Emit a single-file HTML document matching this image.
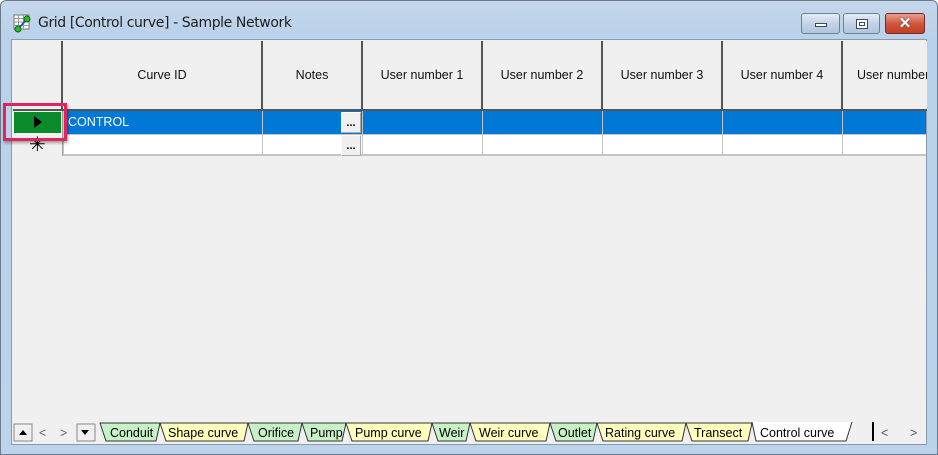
<!DOCTYPE html>
<html><head><meta charset="utf-8"><style>
*{margin:0;padding:0;box-sizing:border-box}
body{width:938px;height:455px;overflow:hidden;background:#fff;font-family:"Liberation Sans",sans-serif;font-size:12px;position:relative}
.frame{position:absolute;left:0;top:0;width:938px;height:455px;background:linear-gradient(#c4d6ea,#b9d1ea 40px,#bcd3ec);border:1px solid #6b7b8c;border-radius:6px 6px 0 0}
.title{position:absolute;left:38px;top:15px;font-size:14px;color:#1e1e1e;font-family:"DejaVu Sans","Liberation Sans",sans-serif;letter-spacing:-0.4px}
.btn{position:absolute;top:13px;height:21px;border:1px solid #6f7f95;border-radius:3px;background:linear-gradient(#e4ecf6,#c4d3e6 50%,#b3c5dc)}
.panel{position:absolute;left:11px;top:39px;width:916px;height:406px;background:#f0f0f0;border:1px solid #8a9aab}
.a{position:absolute}
.hd{position:absolute;top:1px;height:70px;border-right:2px solid #555;border-bottom:2px solid #555;background:#f0f0f0;display:flex;align-items:center;justify-content:center;color:#111;font-size:12.5px}
.c{position:absolute;border-right:1px solid #c4c4c4}
.dots{position:absolute;width:20px;height:21px;background:#f0f0f0;border:1px solid #fff;border-right-color:#aaa;border-bottom-color:#aaa;font-size:11px;text-align:center;line-height:20px;font-weight:bold}
</style></head><body>
<div class="frame"></div>
<svg class="a" style="left:13px;top:14px" width="20" height="20" viewBox="0 0 20 20">
<rect x="1" y="1" width="15" height="14" fill="#fff" stroke="#777"/>
<path d="M1 4.5H16M1 8H16M1 11.5H16M5.5 1V15M10.5 1V15" stroke="#999"/>
<path d="M5 15L14 5" stroke="#1e5fd0" stroke-width="2"/>
<circle cx="5" cy="15" r="3" fill="#2db82d" stroke="#0a6a0a"/><circle cx="14" cy="5" r="3" fill="#2db82d" stroke="#0a6a0a"/>
</svg>
<div class="title">Grid [Control curve] - Sample Network</div>
<div class="btn" style="left:801px;width:39px"><div class="a" style="left:13px;top:9px;width:12px;height:4px;border:1px solid #3a4a5f;background:#fff"></div></div>
<div class="btn" style="left:843px;width:37px"><div class="a" style="left:12px;top:5px;width:12px;height:10px;border:1px solid #3a4a5f;background:#fff"><div class="a" style="left:2px;top:2px;width:6px;height:4px;border:1px solid #3a4a5f"></div></div></div>
<div class="btn" style="left:885px;width:40px;border-color:#7a2a22;background:linear-gradient(#e8a08f,#d2573d 50%,#c23e26)"><div class="a" style="left:0;top:0;width:38px;text-align:center;color:#fff;font-weight:bold;font-size:15px;line-height:19px;text-shadow:0 0 2px #555">✕</div></div>
<div class="panel">
<div class="hd" style="left:1px;width:50px"></div>
<div class="hd" style="left:51px;width:200px">Curve ID</div>
<div class="hd" style="left:251px;width:100px">Notes</div>
<div class="hd" style="left:351px;width:120px">User number 1</div>
<div class="hd" style="left:471px;width:120px">User number 2</div>
<div class="hd" style="left:591px;width:120px">User number 3</div>
<div class="hd" style="left:711px;width:120px">User number 4</div>
<div class="hd" style="left:831px;width:84px;border-right:none;justify-content:flex-start;padding-left:14px;overflow:hidden;white-space:nowrap">User number 5</div>
<div class="a" style="left:1px;top:71px;width:913px;height:23px;background:#0078d7"></div>
<div class="a" style="left:1px;top:94px;width:913px;height:22px;background:#fff;border-bottom:2px solid #c4c4c4;border-top:1px solid #c4c4c4"></div>
<div class="a" style="left:1px;top:71px;width:50px;height:45px;background:#f0f0f0;border-right:1px solid #a0a0a0"></div>
<div class="a" style="left:2px;top:72px;width:47px;height:21px;background:#0a8a2a"></div>
<div class="a" style="left:22px;top:76px;width:0;height:0;border-left:8px solid #000;border-top:6px solid transparent;border-bottom:6px solid transparent"></div>
<div class="a" style="left:17px;top:94px;font-size:20px;line-height:22px">✳</div>
<div class="c" style="left:51px;top:71px;height:45px;border-color:#c4c4c4"></div>
<div class="c" style="left:250px;top:71px;height:45px"></div>
<div class="c" style="left:350px;top:71px;height:45px"></div>
<div class="c" style="left:470px;top:71px;height:45px"></div>
<div class="c" style="left:590px;top:71px;height:45px"></div>
<div class="c" style="left:710px;top:71px;height:45px"></div>
<div class="c" style="left:830px;top:71px;height:45px"></div>
<div class="a" style="left:56px;top:75px;color:#fff;font-size:12.5px">CONTROL</div>
<div class="dots" style="left:329px;top:72px">...</div>
<div class="dots" style="left:329px;top:95px">...</div>
</div>
<div class="a" style="left:3px;top:103px;width:64px;height:38px;border:3px solid #e0245e;box-shadow:1px 2px 3px rgba(0,0,0,.35)"></div>
<svg class="a" style="left:12px;top:420px" width="914" height="24" viewBox="12 420 914 24" font-family="Liberation Sans, sans-serif" font-size="12.5">
<rect x="12" y="420" width="914" height="24" fill="#f0f0f0"/>
<rect x="14" y="424" width="18" height="17" fill="#f0f0f0" stroke="#888"/><path d="M19 435L23 430L27 435Z" fill="#000"/>
<text x="39" y="437" fill="#666">&lt;</text><text x="60" y="437" fill="#666">&gt;</text>
<rect x="77" y="424" width="18" height="17" fill="#f0f0f0" stroke="#888"/><path d="M81 430L89 430L85 435Z" fill="#000"/>
<g stroke="#333" stroke-width="1">
<path d="M100 423L106 441H156L160 423Z" fill="#c7f2c7"/>
<path d="M160 423L166 441H244L248 423Z" fill="#ffffc0"/>
<path d="M248 423L254 441H298L302 423Z" fill="#c7f2c7"/>
<path d="M302 423L308 441H342L346 423Z" fill="#c7f2c7"/>
<path d="M346 423L352 441H428L432 423Z" fill="#ffffc0"/>
<path d="M432 423L438 441H466L470 423Z" fill="#c7f2c7"/>
<path d="M470 423L476 441H546L550 423Z" fill="#ffffc0"/>
<path d="M550 423L556 441H593L597 423Z" fill="#c7f2c7"/>
<path d="M597 423L603 441H682L686 423Z" fill="#ffffc0"/>
<path d="M686 423L692 441H748L752 423Z" fill="#ffffc0"/>
<path d="M752 422L756 441H846L852 422" fill="#fff"/>
</g>
<g fill="#000">
<text x="110" y="437">Conduit</text><text x="168" y="437">Shape curve</text><text x="258" y="437">Orifice</text>
<text x="310" y="437">Pump</text><text x="355" y="437">Pump curve</text><text x="439" y="437">Weir</text>
<text x="479" y="437">Weir curve</text><text x="558" y="437">Outlet</text><text x="605" y="437">Rating curve</text>
<text x="694" y="437">Transect</text><text x="760" y="437">Control curve</text>
</g>
<path d="M873 422V441" stroke="#000" stroke-width="2"/>
<text x="881" y="437" fill="#555">&lt;</text><text x="910" y="437" fill="#555">&gt;</text>
</svg>
</body></html>
